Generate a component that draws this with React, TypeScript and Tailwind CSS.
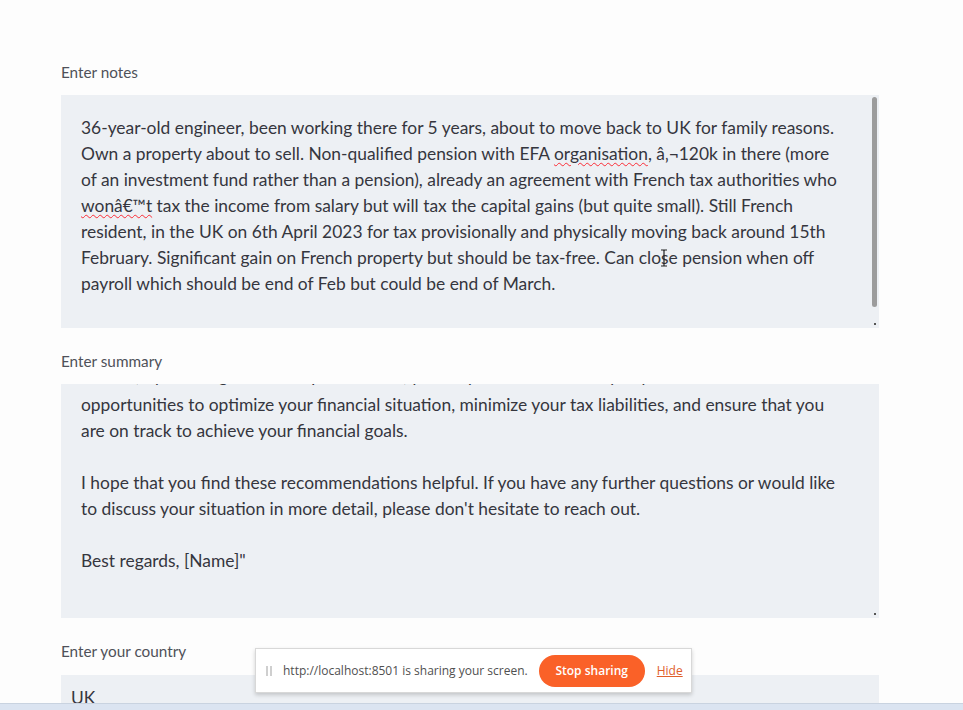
import React from 'react';

const notesLines: React.ReactNode[] = [
  '36-year-old engineer, been working there for 5 years, about to move back to UK for family reasons.',
  <>
    Own a property about to sell. Non-qualified pension with EFA{' '}
    <span className="underline decoration-wavy decoration-red-500 decoration-1 underline-offset-2">organisation</span>, â‚¬120k in there (more
  </>,
  'of an investment fund rather than a pension), already an agreement with French tax authorities who',
  <>
    <span className="underline decoration-wavy decoration-red-500 decoration-1 underline-offset-2">wonâ€™t</span> tax the income from salary but will tax the capital gains (but quite small). Still French
  </>,
  'resident, in the UK on 6th April 2023 for tax provisionally and physically moving back around 15th',
  'February. Significant gain on French property but should be tax-free. Can close pension when off',
  'payroll which should be end of Feb but could be end of March.',
];

const summaryLines = [
  'opportunities to optimize your financial situation, minimize your tax liabilities, and ensure that you',
  'are on track to achieve your financial goals.',
  '',
  'I hope that you find these recommendations helpful. If you have any further questions or would like',
  "to discuss your situation in more detail, please don't hesitate to reach out.",
  '',
  'Best regards, [Name]"',
];

function Label({ children }: { children: React.ReactNode }) {
  return <div className="h-5 text-[15.3px] leading-5 text-[#4f5159]">{children}</div>;
}

function Lines({ lines }: { lines: React.ReactNode[] }) {
  return (
    <>
      {lines.map((l, i) => (
        <div key={i} className="h-[26px] whitespace-nowrap">
          {l}
        </div>
      ))}
    </>
  );
}

export default function App() {
  return (
    <div
      className="relative h-[710px] w-[963px] overflow-hidden bg-[#fdfdfd] text-[#35363e]"
      style={{ fontFamily: 'Lato, "Noto Sans", sans-serif' }}
    >
      <div className="w-[818px] ml-[61px] pt-[62px]">
        {/* Notes */}
        <Label>Enter notes</Label>
        <div className="relative mt-[13px] h-[233px] bg-[#edf0f4] pl-5 pt-5 text-[17.4px] leading-[26px]">
          <Lines lines={notesLines} />
          <div className="absolute right-[2px] top-[2px] h-[210px] w-[5px] rounded-full bg-[#9c9c9c]" />
          <div className="absolute right-[3px] bottom-[3px] h-[2px] w-[2px] bg-[#555]" />
          {/* text cursor */}
          <svg className="absolute left-[599px] top-[154px]" width="8" height="18" viewBox="0 0 8 18">
            <path d="M1 1h2.5l.5.6.5-.6H7M4 1.6v14.8M1 17h2.5l.5-.6.5.6H7" fill="none" stroke="#222" strokeWidth="1.2" />
          </svg>
        </div>

        {/* Summary */}
        <div className="mt-[23px]">
          <Label>Enter summary</Label>
        </div>
        <div className="relative mt-[13px] h-[234px] overflow-hidden bg-[#edf0f4] pl-5 text-[17.4px] leading-[26px]">
          <div className="-mt-[21px] h-[26px] whitespace-nowrap">
            Overall, by working with a tax professional, you may be able to identify any
          </div>
          <div className="mt-[3px]">
            <Lines lines={summaryLines} />
          </div>
          <div className="absolute right-[3px] bottom-[3px] h-[2px] w-[2px] bg-[#555]" />
        </div>

        {/* Country */}
        <div className="mt-[23px]">
          <Label>Enter your country</Label>
        </div>
        <div className="mt-[14px] h-[40px] bg-[#edf0f4] pl-[10px] pt-[10px] text-[17.4px] leading-[26px]">UK</div>
      </div>

      {/* Screen sharing bar */}
      <div
        className="absolute left-[255px] top-[648px] flex h-[45px] w-[437px] items-center border border-[#d8d8d8] bg-white shadow-[0_2px_4px_rgba(0,0,0,0.18)]"
        style={{ fontFamily: '"Open Sans", "Liberation Sans", sans-serif' }}
      >
        <div className="ml-[10px] flex gap-[2px]">
          <div className="h-[10px] w-[2px] bg-[#cfcfcf]" />
          <div className="h-[10px] w-[2px] bg-[#cfcfcf]" />
        </div>
        <span className="ml-[11px] text-[12px] text-[#505050]">http://localhost:8501 is sharing your screen.</span>
        <button className="ml-[11px] h-[32px] w-[106px] rounded-full bg-[#fa6128] text-[12px] font-semibold text-white">
          Stop sharing
        </button>
        <span className="ml-[12px] text-[12px] text-[#e0602c] underline">Hide</span>
      </div>

      {/* Taskbar strip */}
      <div className="absolute bottom-0 left-0 h-[7px] w-full border-t border-[#c9d3e0] bg-[#dbe4f1]" />
    </div>
  );
}
